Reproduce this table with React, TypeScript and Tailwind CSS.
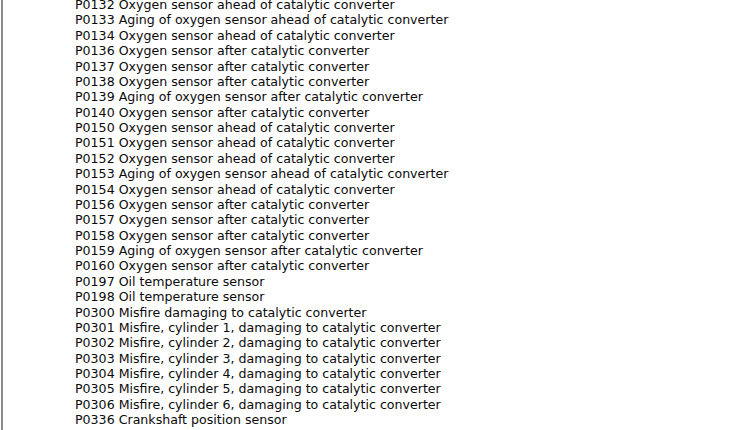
const codes: [string, string][] = [
  ["P0132", "Oxygen sensor ahead of catalytic converter"],
  ["P0133", "Aging of oxygen sensor ahead of catalytic converter"],
  ["P0134", "Oxygen sensor ahead of catalytic converter"],
  ["P0136", "Oxygen sensor after catalytic converter"],
  ["P0137", "Oxygen sensor after catalytic converter"],
  ["P0138", "Oxygen sensor after catalytic converter"],
  ["P0139", "Aging of oxygen sensor after catalytic converter"],
  ["P0140", "Oxygen sensor after catalytic converter"],
  ["P0150", "Oxygen sensor ahead of catalytic converter"],
  ["P0151", "Oxygen sensor ahead of catalytic converter"],
  ["P0152", "Oxygen sensor ahead of catalytic converter"],
  ["P0153", "Aging of oxygen sensor ahead of catalytic converter"],
  ["P0154", "Oxygen sensor ahead of catalytic converter"],
  ["P0156", "Oxygen sensor after catalytic converter"],
  ["P0157", "Oxygen sensor after catalytic converter"],
  ["P0158", "Oxygen sensor after catalytic converter"],
  ["P0159", "Aging of oxygen sensor after catalytic converter"],
  ["P0160", "Oxygen sensor after catalytic converter"],
  ["P0197", "Oil temperature sensor"],
  ["P0198", "Oil temperature sensor"],
  ["P0300", "Misfire damaging to catalytic converter"],
  ["P0301", "Misfire, cylinder 1, damaging to catalytic converter"],
  ["P0302", "Misfire, cylinder 2, damaging to catalytic converter"],
  ["P0303", "Misfire, cylinder 3, damaging to catalytic converter"],
  ["P0304", "Misfire, cylinder 4, damaging to catalytic converter"],
  ["P0305", "Misfire, cylinder 5, damaging to catalytic converter"],
  ["P0306", "Misfire, cylinder 6, damaging to catalytic converter"],
  ["P0336", "Crankshaft position sensor"],
  ["P0340", "Camshaft position sensor"],
];

export default function App() {
  return (
    <div className="h-[430px] w-[750px] overflow-hidden bg-white flex">
      <div className="w-[3px] h-full border-l-2 border-[#8a8a8a] ml-[1px]" />
      <ul className="ml-[71px] -mt-[3px] text-[12.6px] leading-[15.37px] text-[#0a0a0a] font-['DejaVu_Sans',Verdana,sans-serif]">
        {codes.map(([code, desc], i) => (
          <li key={i} className="whitespace-nowrap">
            {code} {desc}
          </li>
        ))}
      </ul>
    </div>
  );
}
